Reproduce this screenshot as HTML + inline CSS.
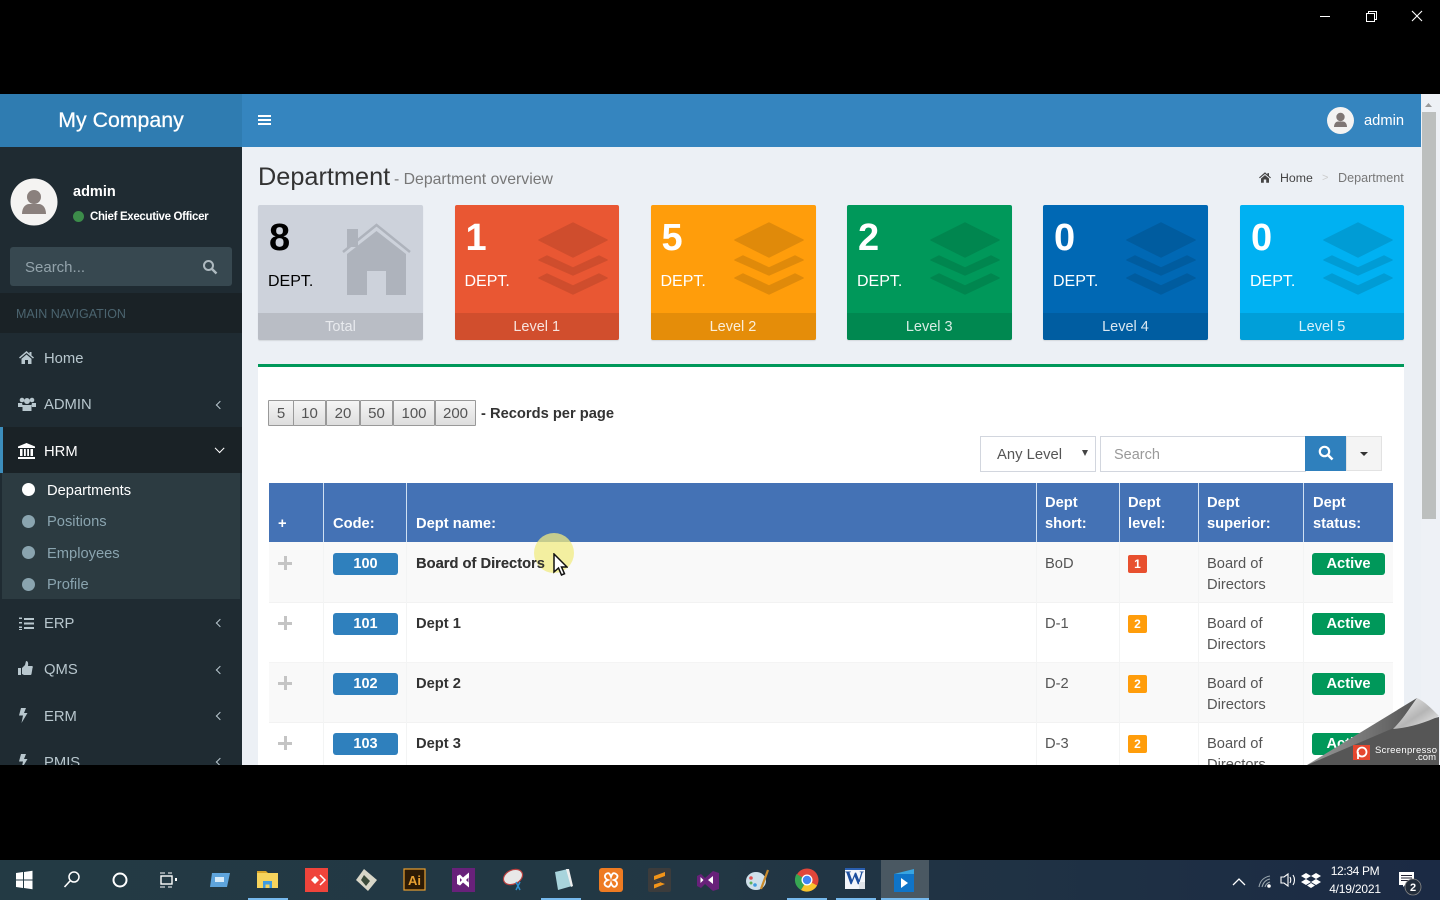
<!DOCTYPE html>
<html><head><meta charset="utf-8"><title>Department</title>
<style>
*{box-sizing:border-box}
html,body{margin:0;padding:0;width:1440px;height:900px;overflow:hidden;background:#000;font-family:"Liberation Sans",Arial,sans-serif}
.a{position:absolute}
.t{position:absolute;white-space:nowrap;line-height:20px;height:20px;margin-top:2px}
#app{position:absolute;left:0;top:94px;width:1440px;height:671px;overflow:hidden;background:#ecf0f5}
.nav{font-size:14.8px;color:#b8c7ce;left:44px}
.sub{font-size:14.7px;left:47px;color:#8aa4af}
.chev{position:absolute;left:217px;width:6px;height:6px;border-left:1.6px solid #b8c7ce;border-bottom:1.6px solid #b8c7ce;transform:rotate(45deg)}
.dot{position:absolute;left:22px;width:13px;height:13px;border-radius:50%;background:#8aa4af}
.box{position:absolute;top:111px;width:165px;height:135px;border-radius:2px;color:#fff;overflow:hidden;box-shadow:0 1px 1px rgba(0,0,0,.1)}
.box b{position:absolute;left:11px;top:11.500px;font-size:38px;line-height:42px}
.box i{position:absolute;left:10px;top:66.500px;font-style:normal;font-size:16px;line-height:20px}
.box u{position:absolute;left:0;right:0;top:107.500px;height:27.500px;background:rgba(0,0,0,.1);text-decoration:none;text-align:center;font-size:14.500px;line-height:28px;color:rgba(255,255,255,.85)}
.box svg{position:absolute;left:82px;top:17px}
.pg{position:absolute;top:306px;height:26px;border:1px solid #999;background:linear-gradient(#f6f6f6,#dedede);color:#555;font-size:15px;line-height:25px;text-align:center;border-radius:1px}
.th{position:absolute;color:#fff;font-weight:bold;font-size:14.700px;line-height:21px;margin-top:1px}
.vl{position:absolute;top:389px;width:1px;height:59px;background:#cfe0f2}
.vr{position:absolute;top:448px;width:1px;height:223px;background:#f3f4f4}
.row{position:absolute;left:269px;width:1124px}
.code{position:absolute;left:333px;width:65px;height:22px;background:#2f80bd;border-radius:3px;color:#fff;font-weight:bold;font-size:14.500px;line-height:22px;text-align:center}
.act{position:absolute;left:1312px;width:73px;height:22px;background:#00985a;border-radius:3px;color:#fff;font-weight:bold;font-size:14.700px;line-height:22px;text-align:center}
.nm{font-weight:bold;font-size:14.700px;color:#333;left:416px}
.td{font-size:14.700px;color:#555}
.plus{position:absolute;left:278px;width:14px;height:14px}
.plus:before{content:"";position:absolute;left:0;top:5.500px;width:14px;height:3px;background:#c4c4c4}
.plus:after{content:"";position:absolute;left:5.500px;top:0;width:3px;height:14px;background:#c4c4c4}
.lv{position:absolute;left:1128px;width:19px;height:18px;border-radius:2px;color:#fff;font-weight:bold;font-size:12px;line-height:18px;text-align:center}
.ul{position:absolute;top:898px;height:2px;width:40px;background:#76b9ed}
</style></head><body>

<!-- window controls -->
<div class="a" style="left:1320px;top:16px;width:10px;height:1px;background:#fff"></div>
<div class="a" style="left:1368px;top:11px;width:9px;height:9px;border:1px solid #fff;background:#000"></div>
<div class="a" style="left:1366px;top:13px;width:9px;height:9px;border:1px solid #fff;background:#000"></div>
<svg class="a" style="left:1411px;top:10px" width="12" height="12"><path d="M1 1L11 11M11 1L1 11" stroke="#fff" stroke-width="1.100"/></svg>

<div id="app">
<!-- header -->
<div class="a" style="left:0;top:0;width:242px;height:53px;background:#2f7cb1"></div>
<div class="a" style="left:242px;top:0;width:1179px;height:53px;background:#3585bf"></div>
<div class="t" style="left:0;width:242px;text-align:center;top:14px;color:#fff;font-size:21.300px;-webkit-text-stroke:.25px #fff">My Company</div>
<div class="a" style="left:258px;top:21px;width:13px;height:2px;background:#fff"></div>
<div class="a" style="left:258px;top:25px;width:13px;height:2px;background:#fff"></div>
<div class="a" style="left:258px;top:29px;width:13px;height:2px;background:#fff"></div>
<svg class="a" style="left:1327px;top:13px" width="27" height="27" viewBox="0 0 27 27"><circle cx="13.500" cy="13.500" r="13.500" fill="#f4f3f2"/><circle cx="13.500" cy="10" r="4.200" fill="#7f7674"/><path d="M7 20c0-4 2.500-5.500 4-5.500h5c1.500 0 4 1.500 4 5.500z" fill="#7f7674"/></svg>
<div class="t" style="left:1364px;top:15px;color:#fff;font-size:14.700px">admin</div>

<!-- scrollbar -->
<div class="a" style="left:1421px;top:0;width:19px;height:671px;background:#eef1f6"></div>
<div class="a" style="left:1422px;top:18px;width:14px;height:407px;background:#bcbfbe"></div>
<svg class="a" style="left:1424px;top:8px" width="10" height="6"><path d="M1 5L4.500 1L8 5z" fill="#9a9a9a"/></svg>

<!-- sidebar -->
<div class="a" style="left:0;top:53px;width:242px;height:618px;background:#1f2b32"></div>
<svg class="a" style="left:10px;top:84px" width="48" height="48" viewBox="0 0 48 48"><circle cx="24" cy="24" r="23.500" fill="#f4f3f2"/><circle cx="24" cy="19" r="7" fill="#8a807d"/><path d="M12 36c0-7 4-10 7-10h10c3 0 7 3 7 10z" fill="#8a807d"/></svg>
<div class="t" style="left:73px;top:86px;color:#fff;font-weight:bold;font-size:14.500px">admin</div>
<div class="a" style="left:73px;top:117px;width:11px;height:11px;border-radius:50%;background:#3c8c4a"></div>
<div class="t" style="left:90px;top:111px;color:#fff;font-weight:bold;font-size:11.500px;letter-spacing:-.33px">Chief Executive Officer</div>
<div class="a" style="left:10px;top:153px;width:222px;height:39px;background:#374850;border-radius:3px"></div>
<div class="t" style="left:25px;top:162px;color:#93a3ab;font-size:15px">Search...</div>
<svg class="a" style="left:202px;top:165px" width="16" height="16" viewBox="0 0 16 16"><circle cx="6.500" cy="6.500" r="4.500" fill="none" stroke="#aebac0" stroke-width="2"/><path d="M10 10l4.500 4.500" stroke="#aebac0" stroke-width="2.400"/></svg>
<div class="a" style="left:0;top:199px;width:242px;height:40px;background:#1a2226"></div>
<div class="t" style="left:16px;top:208px;color:#4b646f;font-size:12.500px">MAIN NAVIGATION</div>

<svg class="a" style="left:19px;top:257px" width="15" height="13" viewBox="0 0 15 13"><path d="M7.500 0L0 6.500l1 1L7.500 2l6.500 5.500 1-1-2.500-2V1h-2v1.800z" fill="#b8c7ce"/><path d="M2.500 7.800L7.500 3.500l5 4.300V13H9V9H6v4H2.500z" fill="#b8c7ce"/></svg>
<div class="t nav" style="top:253px">Home</div>

<svg class="a" style="left:18px;top:303px" width="18" height="14" viewBox="0 0 18 14"><circle cx="4" cy="3" r="2.300" fill="#b8c7ce"/><circle cx="14" cy="3" r="2.300" fill="#b8c7ce"/><circle cx="9" cy="4" r="3" fill="#b8c7ce"/><path d="M0 6h4l1 4H0zM18 6h-4l-1 4h5zM4.500 8h9v6h-9z" fill="#b8c7ce"/></svg>
<div class="t nav" style="top:299px">ADMIN</div>
<div class="chev" style="top:308px"></div>

<div class="a" style="left:0;top:333px;width:242px;height:46px;background:#1a2226"></div>
<div class="a" style="left:0;top:333px;width:3px;height:46px;background:#3c8dbc"></div>
<svg class="a" style="left:18px;top:349px" width="17" height="16" viewBox="0 0 17 16"><path d="M8.500 0L0 3.500V5h17V3.500zM2 6h2.500v7H2zM6 6h1.800v7H6zM9.200 6H11v7H9.200zM12.500 6H15v7h-2.500zM0 14h17v2H0z" fill="#fff"/></svg>
<div class="t" style="left:44px;top:346px;color:#fff;font-size:14.800px">HRM</div>
<div class="a" style="left:216px;top:351px;width:6.500px;height:6.500px;border-left:1.800px solid #fff;border-bottom:1.800px solid #fff;transform:rotate(-45deg)"></div>

<div class="a" style="left:2px;top:379px;width:238px;height:126px;background:#2c3b41"></div>
<div class="dot" style="top:389px;background:#fff"></div>
<div class="t sub" style="top:385px;color:#fff">Departments</div>
<div class="dot" style="top:420.500px"></div>
<div class="t sub" style="top:416px">Positions</div>
<div class="dot" style="top:452px"></div>
<div class="t sub" style="top:448px">Employees</div>
<div class="dot" style="top:483.500px"></div>
<div class="t sub" style="top:479px">Profile</div>

<svg class="a" style="left:19px;top:522px" width="15" height="15" viewBox="0 0 15 15"><path d="M5 2h10v2H5zM5 6.500h10v2H5zM5 11h10v2H5z" fill="#b8c7ce"/><path d="M0 1.500h3v1.500H0zM0 6h3v1.500H0zM0 10.500h3V12H0zM0 13h3v1H0z" fill="#b8c7ce"/></svg>
<div class="t nav" style="top:518px">ERP</div>
<div class="chev" style="top:526px"></div>

<svg class="a" style="left:18px;top:567px" width="15" height="15" viewBox="0 0 15 15"><path d="M0 7h3v7H0zM4 7l3-3 1-4c2 0 2.500 2 2 5h4c1 0 1 1.500 .5 2l-1 6c-.2 1-1 1-1.500 1H6l-2-1z" fill="#b8c7ce"/></svg>
<div class="t nav" style="top:564px">QMS</div>
<div class="chev" style="top:573px"></div>

<svg class="a" style="left:19px;top:614px" width="9" height="15" viewBox="0 0 9 15"><path d="M2 0h5L5 5h3.500L2.500 15 4 7.500H0z" fill="#b8c7ce"/></svg>
<div class="t nav" style="top:611px">ERM</div>
<div class="chev" style="top:619px"></div>

<svg class="a" style="left:19px;top:660px" width="9" height="15" viewBox="0 0 9 15"><path d="M2 0h5L5 5h3.500L2.500 15 4 7.500H0z" fill="#b8c7ce"/></svg>
<div class="t nav" style="top:657px">PMIS</div>
<div class="chev" style="top:665px"></div>

<!-- content header -->
<div class="t" style="left:258px;top:71px;color:#333;font-size:25.300px">Department</div>
<div class="t" style="left:394px;top:74px;color:#777;font-size:15.800px">- Department overview</div>
<svg class="a" style="left:1259px;top:78px" width="12" height="11" viewBox="0 0 15 13"><path d="M7.500 0L0 6.500l1 1L7.500 2l6.500 5.500 1-1-2.500-2V1h-2v1.800z" fill="#444"/><path d="M2.500 7.800L7.500 3.500l5 4.300V13H9V9H6v4H2.500z" fill="#444"/></svg>
<div class="t" style="left:1280px;top:72px;color:#444;font-size:12.300px">Home</div>
<div class="t" style="left:1322px;top:72px;color:#ccc;font-size:11px">&gt;</div>
<div class="t" style="left:1338px;top:72px;color:#777;font-size:12.600px">Department</div>

<!-- stat boxes -->
<div class="box" style="left:258px;background:#cdd2db;color:#000">
 <b>8</b><i>DEPT.</i><u style="background:#b9bdc5;color:#e8eaee">Total</u>
 <svg style="left:84px;top:18px" width="70" height="74" viewBox="0 0 70 74"><path d="M5 6h11v18H5z" fill="#aeb3bc"/><path d="M1 29L34.500 2 68 29" fill="none" stroke="#aeb3bc" stroke-width="2.500"/><path d="M5 31L34.500 8 64 31v41H44V48H25v24H5z" fill="#aeb3bc"/></svg>
</div>
<div class="box" style="left:454.500px;width:164.500px;background:#e95733"><b>1</b><i>DEPT.</i><u>Level 1</u>
 <svg width="74" height="76" viewBox="0 0 74 76"><g fill="#cf4d2d" stroke="#cf4d2d" stroke-linejoin="round" stroke-width="1.500"><path d="M36 1l34 17-34 17L2 18z"/><path d="M10 34l26 12 26-12 8 4-34 15L2 38z"/><path d="M10 52l26 12 26-12 8 4-34 16L2 56z"/></g></svg></div>
<div class="box" style="left:650.500px;background:#ff9d0b"><b>5</b><i>DEPT.</i><u>Level 2</u>
 <svg width="74" height="76" viewBox="0 0 74 76"><g fill="#e08a0a" stroke="#e08a0a" stroke-linejoin="round" stroke-width="1.500"><path d="M36 1l34 17-34 17L2 18z"/><path d="M10 34l26 12 26-12 8 4-34 15L2 38z"/><path d="M10 52l26 12 26-12 8 4-34 16L2 56z"/></g></svg></div>
<div class="box" style="left:847px;width:164.500px;background:#00985a"><b>2</b><i>DEPT.</i><u>Level 3</u>
 <svg width="74" height="76" viewBox="0 0 74 76"><g fill="#00864f" stroke="#00864f" stroke-linejoin="round" stroke-width="1.500"><path d="M36 1l34 17-34 17L2 18z"/><path d="M10 34l26 12 26-12 8 4-34 15L2 38z"/><path d="M10 52l26 12 26-12 8 4-34 16L2 56z"/></g></svg></div>
<div class="box" style="left:1043px;background:#0068b4"><b>0</b><i>DEPT.</i><u>Level 4</u>
 <svg width="74" height="76" viewBox="0 0 74 76"><g fill="#005c9f" stroke="#005c9f" stroke-linejoin="round" stroke-width="1.500"><path d="M36 1l34 17-34 17L2 18z"/><path d="M10 34l26 12 26-12 8 4-34 15L2 38z"/><path d="M10 52l26 12 26-12 8 4-34 16L2 56z"/></g></svg></div>
<div class="box" style="left:1240px;width:164px;background:#00b1f2"><b>0</b><i>DEPT.</i><u>Level 5</u>
 <svg width="74" height="76" viewBox="0 0 74 76"><g fill="#009cd5" stroke="#009cd5" stroke-linejoin="round" stroke-width="1.500"><path d="M36 1l34 17-34 17L2 18z"/><path d="M10 34l26 12 26-12 8 4-34 15L2 38z"/><path d="M10 52l26 12 26-12 8 4-34 16L2 56z"/></g></svg></div>

<!-- main panel -->
<div class="a" style="left:258px;top:270px;width:1146px;height:401px;background:#fff;border-top:3px solid #00985a"></div>

<div class="pg" style="left:268px;width:26px">5</div>
<div class="pg" style="left:293px;width:33px">10</div>
<div class="pg" style="left:326px;width:34px">20</div>
<div class="pg" style="left:360px;width:33px">50</div>
<div class="pg" style="left:393px;width:42px">100</div>
<div class="pg" style="left:435px;width:41px">200</div>
<div class="t" style="left:481px;top:308px;color:#333;font-weight:bold;font-size:14.700px">- Records per page</div>

<div class="a" style="left:980px;top:342px;width:116px;height:36px;border:1px solid #d2d6de;background:#fff"></div>
<div class="t" style="left:997px;top:349px;color:#555;font-size:14.800px">Any Level</div>
<svg class="a" style="left:1081px;top:355px" width="8" height="8"><path d="M1 1h6L4 7z" fill="#444"/></svg>
<div class="a" style="left:1100px;top:342px;width:206px;height:36px;border:1px solid #d2d6de;background:#fff"></div>
<div class="t" style="left:1114px;top:349px;color:#999;font-size:14.500px">Search</div>
<div class="a" style="left:1305px;top:342px;width:41px;height:35px;background:#2f80bd"></div>
<svg class="a" style="left:1318px;top:351px" width="16" height="16" viewBox="0 0 16 16"><circle cx="6.500" cy="6.500" r="4.700" fill="none" stroke="#fff" stroke-width="2.200"/><path d="M10 10l4.500 4.500" stroke="#fff" stroke-width="2.600"/></svg>
<div class="a" style="left:1346px;top:342px;width:36px;height:35px;background:#f4f4f4;border:1px solid #e2e2e2"></div>
<svg class="a" style="left:1360px;top:358px" width="8" height="5"><path d="M0 0h8L4 4z" fill="#333"/></svg>

<!-- table -->
<div class="a" style="left:269px;top:389px;width:1124px;height:59px;background:#4472b5"></div>
<div class="vl" style="left:323px"></div><div class="vl" style="left:406px"></div><div class="vl" style="left:1036px"></div><div class="vl" style="left:1119px"></div><div class="vl" style="left:1198px"></div><div class="vl" style="left:1303px"></div>
<div class="th" style="left:278px;top:419px">+</div>
<div class="th" style="left:333px;top:419px">Code:</div>
<div class="th" style="left:416px;top:419px">Dept name:</div>
<div class="th" style="left:1045px;top:398px">Dept<br>short:</div>
<div class="th" style="left:1128px;top:398px">Dept<br>level:</div>
<div class="th" style="left:1207px;top:398px">Dept<br>superior:</div>
<div class="th" style="left:1313px;top:398px">Dept<br>status:</div>

<div class="row" style="top:448px;height:61px;background:#f9f9f9;border-bottom:1px solid #f2f2f2"></div>
<div class="row" style="top:509px;height:60px;background:#fff;border-bottom:1px solid #f4f4f4"></div>
<div class="row" style="top:569px;height:60px;background:#f9f9f9;border-bottom:1px solid #f2f2f2"></div>
<div class="row" style="top:629px;height:42px;background:#fff"></div>
<div class="vr" style="left:323px"></div><div class="vr" style="left:406px"></div><div class="vr" style="left:1036px"></div><div class="vr" style="left:1119px"></div><div class="vr" style="left:1198px"></div><div class="vr" style="left:1303px"></div>

<div class="plus" style="top:462px"></div>
<div class="code" style="top:459px">100</div>
<div class="t nm" style="top:458px">Board of Directors</div>
<div class="t td" style="left:1045px;top:458px">BoD</div>
<div class="lv" style="top:461px;background:#e8502f">1</div>
<div class="t td" style="left:1207px;top:458px">Board of</div><div class="t td" style="left:1207px;top:479px">Directors</div>
<div class="act" style="top:458.500px">Active</div>

<div class="plus" style="top:522px"></div>
<div class="code" style="top:519px">101</div>
<div class="t nm" style="top:518px">Dept 1</div>
<div class="t td" style="left:1045px;top:518px">D-1</div>
<div class="lv" style="top:521px;background:#ff9d0b">2</div>
<div class="t td" style="left:1207px;top:518px">Board of</div><div class="t td" style="left:1207px;top:539px">Directors</div>
<div class="act" style="top:518.500px">Active</div>

<div class="plus" style="top:582px"></div>
<div class="code" style="top:579px">102</div>
<div class="t nm" style="top:578px">Dept 2</div>
<div class="t td" style="left:1045px;top:578px">D-2</div>
<div class="lv" style="top:581px;background:#ff9d0b">2</div>
<div class="t td" style="left:1207px;top:578px">Board of</div><div class="t td" style="left:1207px;top:599px">Directors</div>
<div class="act" style="top:578.500px">Active</div>

<div class="plus" style="top:642px"></div>
<div class="code" style="top:639px">103</div>
<div class="t nm" style="top:638px">Dept 3</div>
<div class="t td" style="left:1045px;top:638px">D-3</div>
<div class="lv" style="top:641px;background:#ff9d0b">2</div>
<div class="t td" style="left:1207px;top:638px">Board of</div><div class="t td" style="left:1207px;top:659px">Directors</div>
<div class="act" style="top:638.500px">Active</div>

<!-- cursor highlight -->
<div class="a" style="left:534px;top:439px;width:40px;height:40px;border-radius:50%;background:rgba(240,235,130,.75)"></div>
<div class="t nm" style="top:458px;width:130px;overflow:hidden">Board of Directors</div>
<svg class="a" style="left:552px;top:459px" width="16" height="24" viewBox="0 0 16 24"><path d="M2 1v18l4.500-4 3 7 3-1.300-3-6.700H15z" fill="#fff" stroke="#111" stroke-width="1.500"/></svg>

<!-- screenpresso corner -->
<svg class="a" style="left:1300px;top:600px" width="140" height="71" viewBox="0 0 140 71">
 <defs><linearGradient id="cl" x1="0" y1="0" x2="1" y2="1"><stop offset="0" stop-color="#f4f4f4"/><stop offset=".55" stop-color="#b5b5b5"/><stop offset="1" stop-color="#f2f2f2"/></linearGradient>
 <linearGradient id="dk" x1="0" y1="0" x2="1" y2="0"><stop offset="0" stop-color="#9a9a9a"/><stop offset="1" stop-color="#555"/></linearGradient></defs>
 <path d="M7 71L117 4 96 34z" fill="url(#dk)"/>
 <path d="M7 71L96 33 139 23V71z" fill="#565656"/>
 <path d="M117 4C124 7 132 15 139 22 125 29 108 34 93 35 103 25 110 14 117 4z" fill="url(#cl)"/>
 <rect x="53" y="51" width="17" height="15" fill="#e5472f"/>
 <circle cx="62" cy="58" r="4.500" fill="none" stroke="#fff" stroke-width="1.800"/><path d="M58 58v7" stroke="#fff" stroke-width="1.800"/>
 <text x="75" y="59" font-family="Liberation Sans,sans-serif" font-size="9.500" fill="#fff" textLength="62">Screenpresso</text>
 <text x="136" y="66" text-anchor="end" font-family="Liberation Sans,sans-serif" font-size="9.500" fill="#fff">.com</text>
</svg>
</div>

<!-- taskbar -->
<div class="a" style="left:0;top:860px;width:1440px;height:40px;background:linear-gradient(90deg,#233a44,#223744 50%,#1b2a44)"></div>
<div class="a" style="left:881px;top:860px;width:48px;height:40px;background:#4a5862"></div>
<div class="ul" style="left:248px"></div><div class="ul" style="left:541px"></div><div class="ul" style="left:787px"></div><div class="ul" style="left:836px"></div><div class="ul" style="left:881px;width:48px"></div>
<svg class="a" style="left:0;top:860px" width="940" height="40" viewBox="0 0 940 40">
 <path d="M16 13l7-1v7.500h-7zM24 12l8.500-1.300v8.800H24zM16 20.500h7V28l-7-1zM24 20.500h8.500v8.800L24 28z" fill="#fff"/>
 <circle cx="74" cy="17" r="5" fill="none" stroke="#fff" stroke-width="1.500"/><path d="M70 21l-5.500 6" stroke="#fff" stroke-width="1.600"/>
 <ellipse cx="120" cy="20" rx="6.500" ry="6.500" fill="none" stroke="#fff" stroke-width="2"/>
 <path d="M160 13h5M168 13h4M160 27h5M168 27h4" stroke="#fff" stroke-width="1"/><rect x="161" y="16" width="11" height="8" fill="none" stroke="#fff" stroke-width="1.400"/><rect x="175" y="18" width="2" height="3" fill="#fff"/>
 <path d="M212 13h18l-3 14h-17z" fill="#5ea4dc"/><rect x="215" y="17" width="9" height="5" fill="#d8ecfa"/>
 <path d="M257 13h21v15h-21z" fill="#f6d35c"/><path d="M257 11h9l2 2h-11z" fill="#d9a52a"/><path d="M263 21h9v7h-2.500v-3.500h-4V28H263z" fill="#3f9be0"/>
 <rect x="305" y="8" width="23" height="24" fill="#ef443b"/><path d="M311 20l4-4 4 4-4 4z" fill="#fff"/><path d="M320 15l5 5-5 5" fill="none" stroke="#fff" stroke-width="1.500"/>
 <path d="M364 9l13 11-9 11-12-11z" fill="#d8d6c8"/><path d="M364 15l6 6-4 5-5-6z" fill="#3a4a3a"/>
 <rect x="404" y="9" width="21" height="21" fill="#2d1a04" stroke="#e8a031" stroke-width="1.200"/>
 <text x="408" y="25" font-family="Liberation Sans,sans-serif" font-size="13" font-weight="bold" fill="#e8a031">Ai</text>
 <rect x="452" y="8" width="23" height="24" fill="#68217a"/><path d="M457 16l3-1.500 3 3 6-5v15l-6-5-3 3-3-1.500v-8zM460 18v4l2-2zM466 20l2.500 2.500v-5z" fill="#fff" fill-rule="evenodd"/>
 <ellipse cx="513" cy="17" rx="10" ry="7" fill="#e8e8e8" stroke="#b84040" stroke-width="1.200" transform="rotate(-25 513 17)"/><path d="M516 22l4 8M520 22l-4 8" stroke="#2f8fd0" stroke-width="1.500"/>
 <path d="M555 12l13-3 4 17-14 4z" fill="#a8d4dc"/><path d="M566 9l3 0 4 17-2 1z" fill="#eee"/>
 <rect x="599" y="8" width="24" height="24" rx="3" fill="#ee7b22"/><path d="M606 14c3-2 4 0 5 3 1-3 2-5 5-3s1 5-2 6c3 1 4 4 2 6s-4 0-5-3c-1 3-2 5-5 3s-1-5 2-6c-3-1-4-4-2-6z" fill="none" stroke="#fff" stroke-width="1.800"/>
 <rect x="648" y="8" width="23" height="24" rx="2" fill="#3c3c3c"/><path d="M654 16l11-4v4l-11 4zM654 20l11 4-11 4.500v-4l7-2.300-7-2.200z" fill="#f29419"/>
 <path d="M697 16l4-2 4 4 8-7 6 2v16l-6 2-8-7-4 4-4-2z" fill="#68217a"/><path d="M700.500 17v6l3-3zM708 20l5 4v-8z" fill="#fff"/>
 <ellipse cx="756" cy="21" rx="10" ry="9" fill="#cfe0ea"/><circle cx="751" cy="18" r="1.800" fill="#e05050"/><circle cx="755" cy="25" r="1.800" fill="#3f9be0"/><circle cx="751" cy="23" r="1.500" fill="#5ab05a"/><path d="M768 10l-7 19" stroke="#c98a2a" stroke-width="2.200"/>
 <circle cx="807" cy="20" r="11.500" fill="#e0463a"/><path d="M807 20l10 5.500A11.500 11.500 0 0 1 801 30z" fill="#f7c52e"/><path d="M807 20L801 30A11.500 11.500 0 0 1 796.500 14z" fill="#37a652"/><circle cx="807" cy="20" r="5.500" fill="#fff"/><circle cx="807" cy="20" r="4.200" fill="#4285f4"/>
 <rect x="845" y="8" width="20" height="21" fill="#f4f6fa"/><rect x="845" y="8" width="20" height="2" fill="#2a5fb0"/>
 <text x="845" y="24" font-family="Liberation Serif,serif" font-size="19" font-weight="bold" fill="#1d4f9e">W</text>
 <path d="M859 22h6v7h-6z" fill="#dfe3e8"/>
 <path d="M894 14l20-5v6h-20z" fill="#38a4e0"/><rect x="894" y="14" width="20" height="18" fill="#0f74c8"/><path d="M901 18l7 5-7 5z" fill="#fff"/>
</svg>
<svg class="a" style="left:1225px;top:860px" width="215" height="40" viewBox="0 0 215 40">
 <path d="M8 25l6-6 6 6" fill="none" stroke="#fff" stroke-width="1.300"/>
 <path d="M34 27c1-6 5-10 11-11M37 27c1-4 3-7 8-8M40 27c.5-2 2-4 5-5" fill="none" stroke="#9aa6ae" stroke-width="1.100"/><circle cx="44" cy="26" r="1.800" fill="#fff"/>
 <path d="M56 17h3l4-3v12l-4-3h-3z" fill="none" stroke="#fff" stroke-width="1.100"/><path d="M65 17c1 2 1 4 0 6M68 15c2 3 2 7 0 10" fill="none" stroke="#fff" stroke-width="1.100"/>
 <path d="M81 13l5 3-5 3-5-3zM91 13l5 3-5 3-5-3zM81 19l5 3-5 3-5-3zM91 19l5 3-5 3-5-3zM86 23l4 2.500-4 2.500-4-2.500z" fill="#fff"/>
 <text x="130" y="15" text-anchor="middle" font-family="Liberation Sans,sans-serif" font-size="12" letter-spacing="-.35" fill="#fff">12:34 PM</text>
 <text x="130" y="33" text-anchor="middle" font-family="Liberation Sans,sans-serif" font-size="12" letter-spacing="-.2" fill="#fff">4/19/2021</text>
 <path d="M174 12h15v13h-9l-2 2v-2h-4z" fill="#fff"/><path d="M176 15.500h11M176 18h11M176 20.500h8" stroke="#223" stroke-width="1"/>
 <circle cx="188" cy="27" r="8" fill="#222c3a" stroke="#888" stroke-width=".8"/>
 <text x="188" y="31" text-anchor="middle" font-family="Liberation Sans,sans-serif" font-size="11" font-weight="bold" fill="#fff">2</text>
</svg>
</body></html>
